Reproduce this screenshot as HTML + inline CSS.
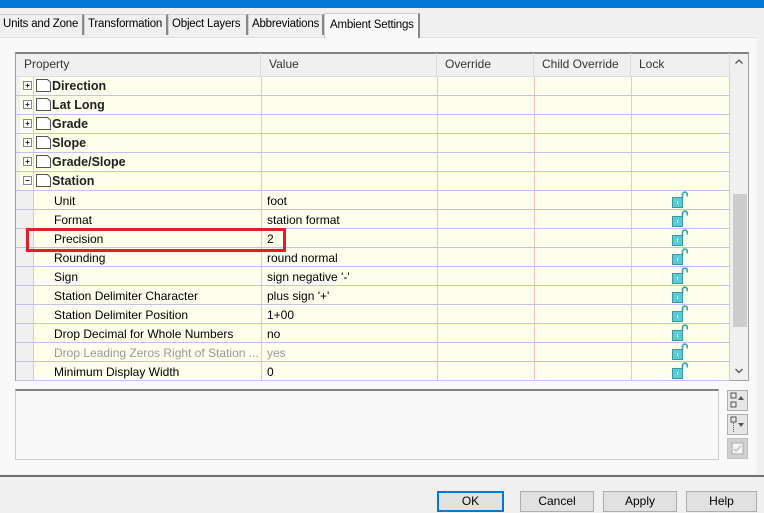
<!DOCTYPE html>
<html><head><style>
*{margin:0;padding:0;box-sizing:border-box}
body{width:764px;height:513px;background:#f0f0f0;font-family:"Liberation Sans",sans-serif;font-size:12px;color:#000;position:relative;overflow:hidden}
.a{position:absolute}
.tab{position:absolute;top:14px;height:21px;border:1px solid #d0d0d0;border-bottom:none;background:#f0f0f0;line-height:19px;padding-left:3px;border-right:2px solid #888;white-space:nowrap;overflow:hidden;font-size:11.5px;letter-spacing:-0.2px}
.hd{position:absolute;top:53px;height:23px;line-height:23px;color:#333;padding-left:8px;border-right:1px solid #ddd}
.row{position:absolute;left:16px;width:714px;height:19px;border-bottom:1px solid #c4c0f4}
.t{position:absolute;top:1px;line-height:19px;white-space:nowrap}
.vl{position:absolute;top:77px;height:303px;width:1px;background:#f5c0c0}
.btn{position:absolute;top:491px;height:21px;border:1px solid #adadad;background:#e1e1e1;text-align:center;line-height:19px}
</style></head><body>
<div class="a" style="left:0;top:0;width:764px;height:8px;background:#0078d4"></div>
<div class="tab" style="left:0;width:84px;border-left:none">Units and Zone</div>
<div class="tab" style="left:84px;width:84px">Transformation</div>
<div class="tab" style="left:168px;width:80px">Object Layers</div>
<div class="tab" style="left:248px;width:76px">Abbreviations</div>
<div class="tab" style="left:324px;top:13px;height:25px;width:96px;background:#f9f9f9;border-color:#ccc;border-right:2px solid #888;z-index:2;padding-left:5px;line-height:22px">Ambient Settings</div>
<div class="a" style="left:0;top:37px;width:757px;height:437px;background:#f9f9f9;border-top:1px solid #e0e0e0"></div>
<div class="a" style="left:0;top:475px;width:764px;height:2px;background:#707070"></div>
<div class="a" style="left:15px;top:52px;width:734px;height:329px;border:1px solid #a0a0a0;border-top:2px solid #828282;background:#f0f0f0"></div>
<div class="a" style="left:20px;top:77px;width:710px;height:303px;background:#fefeec"></div>
<div class="hd" style="left:16px;width:245px">Property</div>
<div class="hd" style="left:261px;width:176px">Value</div>
<div class="hd" style="left:437px;width:97px">Override</div>
<div class="hd" style="left:534px;width:97px">Child Override</div>
<div class="hd" style="left:631px;width:99px">Lock</div>
<div class="a" style="left:16px;top:76px;width:714px;height:1px;background:#ddd"></div>
<div class="a" style="left:16px;top:191px;width:18px;height:189px;background:#f0f0f0"></div>
<div class="vl" style="left:33px"></div><div class="vl" style="left:261px"></div><div class="vl" style="left:437px"></div><div class="vl" style="left:534px"></div><div class="vl" style="left:631px"></div><div class="vl" style="left:729px"></div>
<div id="rows"></div>
<div class="a" style="left:731px;top:54px;width:17px;height:326px;background:#f0f0f0"></div>
<div class="a" style="left:733px;top:194px;width:14px;height:133px;background:#cdcdcd"></div>
<svg class="a" style="left:734px;top:58px" width="10" height="8"><path d="M1.5 5.5l3.5-3.5 3.5 3.5" fill="none" stroke="#555" stroke-width="1.3"/></svg>
<svg class="a" style="left:734px;top:367px" width="10" height="8"><path d="M1.5 2l3.5 3.5 3.5-3.5" fill="none" stroke="#555" stroke-width="1.3"/></svg>
<div class="a" style="left:15px;top:389px;width:704px;height:71px;border:1px solid #ccc;border-top:2px solid #828282;background:#f9f9f9"></div>
<div class="a" style="left:727px;top:390px;width:21px;height:21px;border:1px solid #adadad;background:#e6e6e6"><svg width="19" height="19"><rect x="3" y="2" width="5" height="5" fill="none" stroke="#555"/><rect x="3" y="11" width="5" height="5" fill="none" stroke="#555"/><path d="M10 9l3-4 3 4z" fill="#555"/></svg></div>
<div class="a" style="left:727px;top:414px;width:21px;height:21px;border:1px solid #adadad;background:#e6e6e6"><svg width="19" height="19"><rect x="3" y="2" width="5" height="5" fill="none" stroke="#555"/><path d="M5.5 8v9" stroke="#555" stroke-dasharray="1,1"/><path d="M10 8l3 4 3-4z" fill="#555"/></svg></div>
<div class="a" style="left:727px;top:438px;width:21px;height:21px;border:1px solid #c0c0c0;background:#d0d0d0"><svg width="19" height="19"><rect x="4" y="4" width="11" height="11" fill="#f4f4f4" stroke="#aaa"/><path d="M6 10l2 2 5-5" stroke="#bbb" fill="none" stroke-width="1.4"/></svg></div>
<div class="btn" style="left:437px;width:67px;border:2px solid #0078d4;line-height:17px">OK</div>
<div class="btn" style="left:520px;width:74px">Cancel</div>
<div class="btn" style="left:603px;width:74px">Apply</div>
<div class="btn" style="left:686px;width:71px">Help</div>
<div class="a" style="left:26px;top:228px;width:260px;height:24px;border:3px solid #e41e26"></div>
<script>
var g=["Direction","Lat Long","Grade","Slope","Grade/Slope","Station"];
var c=[["Unit","foot"],["Format","station format"],["Precision","2"],["Rounding","round normal"],["Sign","sign negative '-'"],["Station Delimiter Character","plus sign '+'"],["Station Delimiter Position","1+00"],["Drop Decimal for Whole Numbers","no"],["Drop Leading Zeros Right of Station ...","yes",1],["Minimum Display Width","0"]];
var h="",y=77;
g.forEach(function(n,i){h+='<div class="row" style="top:'+y+'px"><svg class="a" style="left:6px;top:3px" width="12" height="12"><rect x="1.5" y="1.5" width="8" height="8" fill="#fff" stroke="#888"/><path d="M3.5 5.5h4'+(i<5?'M5.5 3.5v4':'')+'" stroke="#333"/></svg><svg class="a" style="left:19px;top:1px" width="17" height="15"><path d="M1.5 1.5h11l3 3v9h-14z" fill="#fff" stroke="#555"/></svg><span class="t" style="left:36px;top:0;font-weight:bold;font-size:12.5px;color:#222">'+n+'</span></div>';y+=19;});
c.forEach(function(r){h+='<div class="row" style="top:'+y+'px"><span class="t" style="left:38px;'+(r[2]?'color:#999':'')+'">'+r[0]+'</span><span class="t" style="left:251px;'+(r[2]?'color:#999':'')+'">'+r[1]+'</span><svg class="a" style="left:655px;top:-1px" width="17" height="19"><path d="M11.5 8V4.5a2.4 2.4 0 0 1 4.8 0V6.5" fill="none" stroke="#3aa6b0" stroke-width="1.7"/><rect x="1.5" y="7.5" width="10" height="10" fill="#5ccbd6" stroke="#3a9aa4"/><path d="M6.5 11v3" stroke="#fff"/></svg></div>';y+=19;});
document.getElementById("rows").innerHTML=h;
</script>
</body></html>
